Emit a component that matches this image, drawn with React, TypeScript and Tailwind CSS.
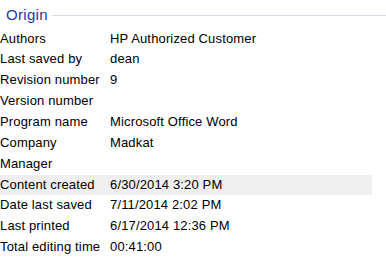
const rows: { label: string; value: string; selected?: boolean }[] = [
  { label: 'Authors', value: 'HP Authorized Customer' },
  { label: 'Last saved by', value: 'dean' },
  { label: 'Revision number', value: '9' },
  { label: 'Version number', value: '' },
  { label: 'Program name', value: 'Microsoft Office Word' },
  { label: 'Company', value: 'Madkat' },
  { label: 'Manager', value: '' },
  { label: 'Content created', value: '6/30/2014 3:20 PM', selected: true },
  { label: 'Date last saved', value: '7/11/2014 2:02 PM' },
  { label: 'Last printed', value: '6/17/2014 12:36 PM' },
  { label: 'Total editing time', value: '00:41:00' },
];

function GroupHeader({ title, className = '' }: { title: string; className?: string }) {
  return (
    <div className={`flex h-[28.6px] items-start pt-[5px] ${className}`}>
      <span className="pl-[6px] pr-[4px] text-[15px] leading-[20px] tracking-[0.3px] text-[#1e3a9c]">
        {title}
      </span>
      <div className="mt-[10px] h-px flex-1 bg-[#d5dce8]" />
    </div>
  );
}

export default function App() {
  return (
    <div
      className="h-[270px] w-[386px] overflow-hidden bg-white text-black"
      style={{ fontFamily: '"Liberation Sans", Arial, sans-serif' }}
    >
      <GroupHeader title="Origin" />
      {rows.map((row) => (
        <div
          key={row.label}
          className={`flex h-[20.87px] w-[372px] items-center text-[13px] leading-[20.87px] tracking-[0.15px] ${
            row.selected ? 'bg-[#efefef]' : ''
          }`}
        >
          <span className="w-[110px] shrink-0 whitespace-nowrap">{row.label}</span>
          <span className="whitespace-nowrap">{row.value}</span>
        </div>
      ))}
      <GroupHeader title="Content" className="mt-[3px]" />
    </div>
  );
}
